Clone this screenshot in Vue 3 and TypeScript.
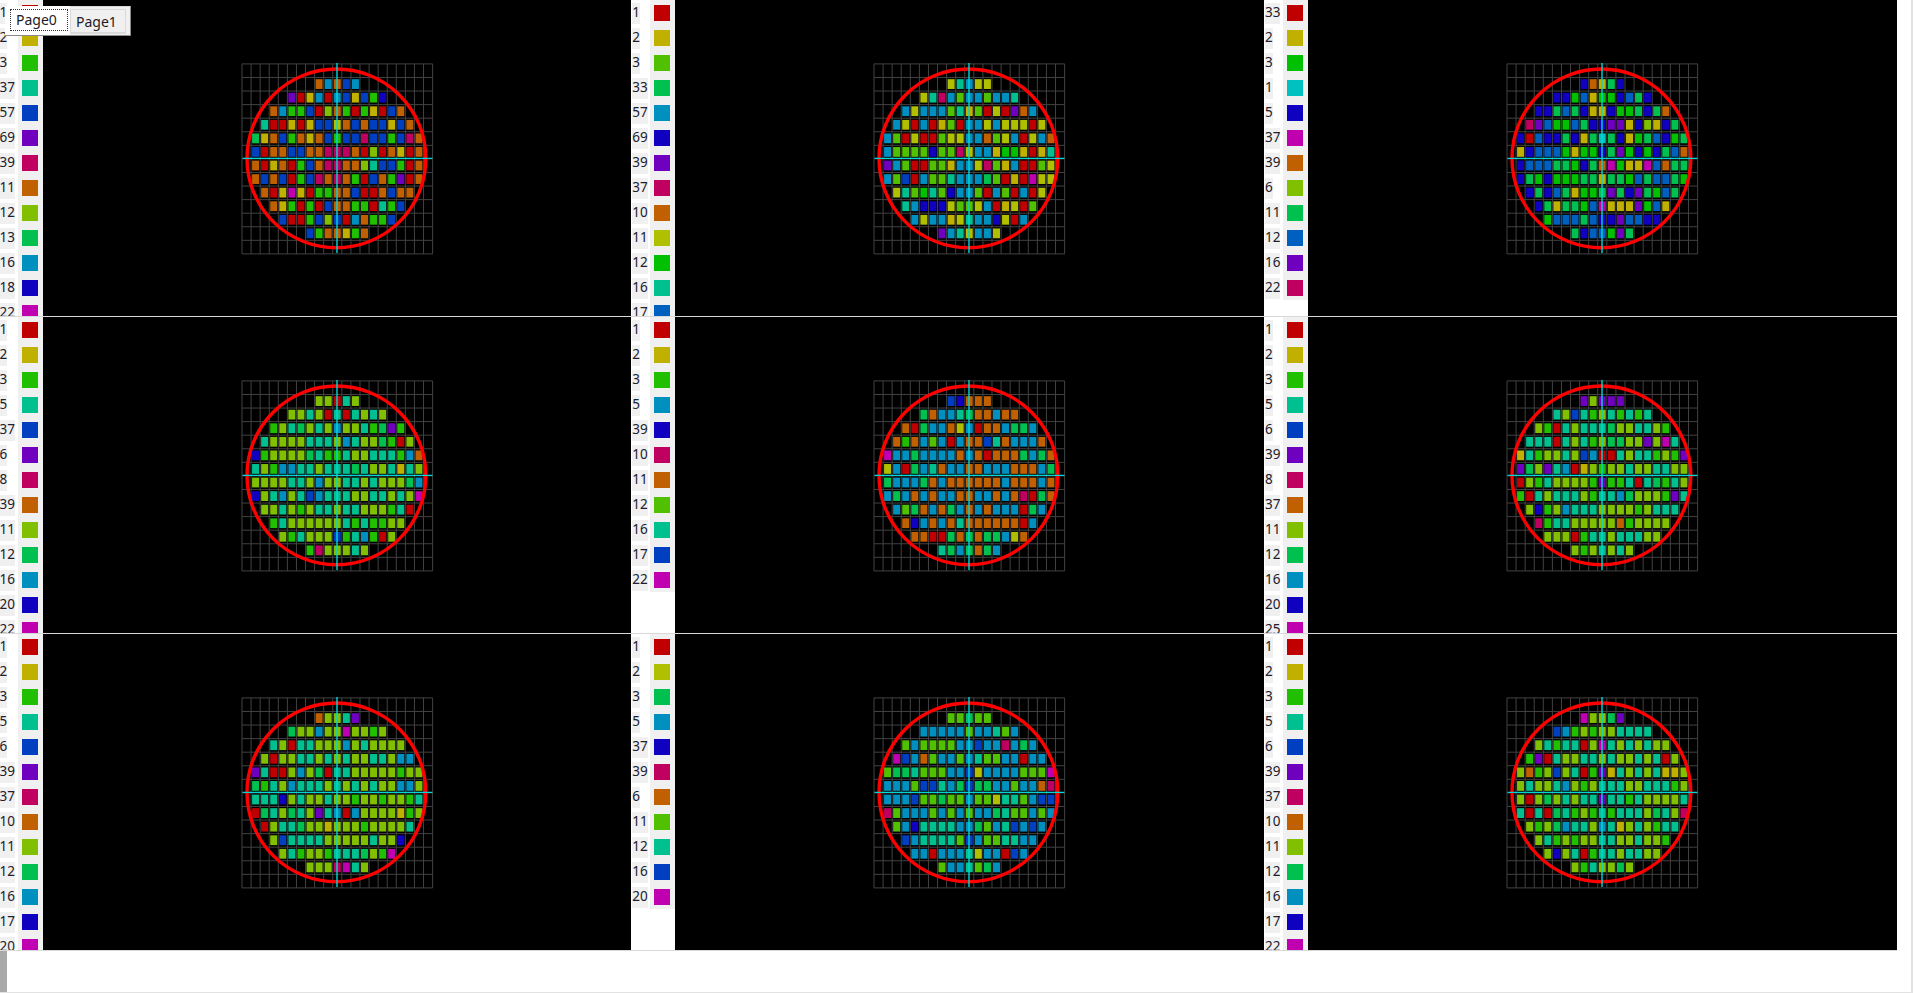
<script setup lang="ts">
const palette: Record<string, string> = {
  R: '#c00000', O: '#c06000', Y: '#c0b000', A: '#b0c000', L: '#80c000', H: '#50c000',
  G: '#20c000', Q: '#00c000', E: '#00c050', T: '#00c090', U: '#00c0c0', C: '#0090c0',
  N: '#0060c0', B: '#0040c0', D: '#1000c0', P: '#7000c0', M: '#c000b0', K: '#c00060'
}

const rowStart = [7, 4, 2, 1, 0, 0, 0, 0, 1, 2, 3, 6]
const pitchX = 190.6 / 21
const pitchY = 190 / 14
const gridLeft = 199
const gridTop = 63.9

interface Wafer {
  legend: [string, string][]
  rows: string[]
}

const wafers: Wafer[] = [
  {
    legend: [['1', 'R'], ['2', 'Y'], ['3', 'G'], ['37', 'T'], ['57', 'B'], ['69', 'P'], ['39', 'K'], ['11', 'O'], ['12', 'L'], ['13', 'E'], ['16', 'C'], ['18', 'D'], ['22', 'M']],
    rows: ['OCOBC', 'PRYCRCBYBGD', 'OCGGBRLOGRGYRBO', 'TRRYRYBBAOBOBBYBO', 'EYOBGOYOBGBBKBBGBKO', 'BROOBBOOKKKORLROYRO', 'ORYORGBOKKOOLTBBGRO', 'OBOBRGBKOKOGRBOGPRO', 'ORYMYRGGOOBRROBOO', 'OYGRGRBOOGGRTGB', 'BRRGBLBRCOGGB', 'BGOOYGO']
  },
  {
    legend: [['1', 'R'], ['2', 'Y'], ['3', 'H'], ['33', 'E'], ['57', 'C'], ['69', 'D'], ['39', 'P'], ['37', 'K'], ['10', 'O'], ['11', 'A'], ['12', 'Q'], ['16', 'T'], ['17', 'N']],
    rows: ['ATCAA', 'ATKCHCCHCCT', 'CACCCHTYHRARPOC', 'CARCRYHRCCACAAARA', 'CHRARRHAACCOHACRACO', 'CHHHHDHHKACCYQQYRYT', 'PCHRRHHYCCAKHYCRRHA', 'CHBRCHHTCCCEHRYRMAA', 'ATHQTHDCCHRCHRCRA', 'TCDDDAHHACRYARH', 'CACCYATCCDARC', 'PCTACCA']
  },
  {
    legend: [['33', 'R'], ['2', 'Y'], ['3', 'Q'], ['1', 'U'], ['5', 'D'], ['37', 'M'], ['39', 'O'], ['6', 'L'], ['11', 'E'], ['12', 'N'], ['16', 'P'], ['22', 'K']],
    rows: ['DOYED', 'DDQNYQQDNED', 'DDENEDYYDQQEDEO', 'KPNQQNEDDPPYDLYDE', 'DRNDDEDYEUEDYQENDQE', 'YDNNNQYQQDEPQDQDENO', 'DNNNEEQDEOMQYYMNOEE', 'DEQDQQQEEYEEQNENNEQ', 'DEDNEYQQEPEDPEQNE', 'DEYEEQNMYYYPQNY', 'QNNNENDDPNNDD', 'EDNNQPE']
  },
  {
    legend: [['1', 'R'], ['2', 'Y'], ['3', 'G'], ['5', 'T'], ['37', 'B'], ['6', 'P'], ['8', 'K'], ['39', 'O'], ['11', 'L'], ['12', 'E'], ['16', 'C'], ['20', 'D'], ['22', 'M']],
    rows: ['LLRTL', 'LLTLRTRTLTL', 'GLTELTLCLLTGEPG', 'TLLLLTTTLCTLLEGRL', 'DGLLLLETGGTLLTTTGCO', 'TLGCCTTLTTTETLLTYTL', 'LLLLTTLCLLTTLTLLLEC', 'DLTCLTBCTTTLLTTLTLM', 'LLTLGLTTLTTLLLGTR', 'GTLLLLLLTGTGGLL', 'LGTLLLBGTCGRL', 'GKLLLTL']
  },
  {
    legend: [['1', 'R'], ['2', 'Y'], ['3', 'G'], ['5', 'C'], ['39', 'D'], ['10', 'K'], ['11', 'O'], ['12', 'H'], ['16', 'T'], ['17', 'B'], ['22', 'M']],
    rows: ['BDOOO', 'EOCCTEOOCOO', 'ORECCOACROOCEEC', 'OGOCHCRCOOBTOCCCO', 'MCCECCCCOCOROOOECEO', 'ACRECTOCCOOCCCOOOCE', 'ECCCEOCOOOOOOCOOOCO', 'CECOCOCCOOCCOCOKREO', 'CHEOCOECOCOCCCREC', 'ODCOCOTOOOOOORC', 'OORREOEOEECAO', 'TECEOEC']
  },
  {
    legend: [['1', 'R'], ['2', 'Y'], ['3', 'G'], ['5', 'T'], ['6', 'B'], ['39', 'P'], ['8', 'K'], ['37', 'O'], ['11', 'L'], ['12', 'E'], ['16', 'C'], ['20', 'D'], ['25', 'M']],
    rows: ['PLPPP', 'TLBTGLTGTGT', 'LGRTLTTTELLTTLG', 'TTTRTLTGLEELLPLMT', 'YTGLLTLBCRRTLTTGLGP', 'PELPTCRYLGLLTLLTTLL', 'RLGTLLLLGPGGTRTEGTL', 'GRTLTTTLGTTCELLLGPT', 'LDGLCTTTLLLLGLTTT', 'KGTTLLLLLOGLLLL', 'LLLRGTTLTTTLL', 'LGLTLTL']
  },
  {
    legend: [['1', 'R'], ['2', 'Y'], ['3', 'G'], ['5', 'T'], ['6', 'B'], ['39', 'P'], ['37', 'K'], ['10', 'O'], ['11', 'L'], ['12', 'E'], ['16', 'C'], ['17', 'D'], ['20', 'M']],
    rows: ['OLLTP', 'ELLCLLMLLGL', 'TLRTTLLLCLTLLLL', 'LRLLTTLTLTLLTTLCC', 'PTRRLCLERTTLLLLLGLL', 'EGTLCTTTLTLTLTLLCCL', 'TTTDLTLLTLLGLLGLLGT', 'RETLETLPTCRCLLLLYGL', 'RLTTELLYLLLGLLLLT', 'LBTTTTLLLLLTLLD', 'LTGLLGTTTELGM', 'LLLKMTL']
  },
  {
    legend: [['1', 'R'], ['2', 'A'], ['3', 'E'], ['5', 'C'], ['37', 'D'], ['39', 'K'], ['6', 'O'], ['11', 'H'], ['12', 'T'], ['16', 'B'], ['20', 'M']],
    rows: ['HHEHH', 'CCCCCHCCTHC', 'HCHHHHCCBCCKCEC', 'MBCOHCCHCTHHCCRCC', 'HEETHHHCCBACCCCHHHM', 'CCCHBBTCEBEECCHCCOK', 'CCCBHHEHHCHHATTHCBB', 'KHCCCHCHCHCCETHHCHC', 'HCDTTTTCCEHCTBCBC', 'BCTTTTHBCHHTTCC', 'CCRCCCTACCRBC', 'HCCTHEC']
  },
  {
    legend: [['1', 'R'], ['2', 'Y'], ['3', 'G'], ['5', 'T'], ['6', 'B'], ['39', 'P'], ['37', 'K'], ['10', 'O'], ['11', 'L'], ['12', 'E'], ['16', 'C'], ['17', 'D'], ['22', 'M']],
    rows: ['MLLEP', 'BCGLGLLTTTT', 'LTGTTRLMTLTLTLL', 'GPRTLLTTLTLLTLTRL', 'LOGLBLTRGPYTLTLTYYL', 'LTLLTCLGLTTTLLTTTGL', 'LRLELTLTTPTTGTLLLLT', 'TRTRETGLGTGTTTLETLK', 'LGLECTTLCTYLTLGTT', 'LTGLGLLTTLLTLLG', 'LDLTRGTTLTTLL', 'LGTLLEL']
  }
]

interface Die {
  x: number
  y: number
  fill: string
}

function diesOf(w: Wafer): Die[] {
  const out: Die[] = []
  w.rows.forEach((row, r) => {
    for (let i = 0; i < row.length; i++) {
      out.push({
        x: gridLeft + (rowStart[r] + i + 1) * pitchX + 1,
        y: gridTop + (r + 1) * pitchY + 1.7,
        fill: palette[row[i]]
      })
    }
  })
  return out
}

const panels = wafers.map((w) => ({
  legend: w.legend.map(([label, key]) => ({ label, color: palette[key] })),
  dies: diesOf(w)
}))

const xLines = Array.from({ length: 22 }, (_, i) => gridLeft + i * pitchX)
const yLines = Array.from({ length: 15 }, (_, i) => gridTop + i * pitchY)
const gridRight = gridLeft + 190.6
const gridBottom = gridTop + 190
</script>

<template>
  <div class="window">
    <div class="tabs">
      <div class="tab active"><span class="focus">Page0</span></div>
      <div class="tab">Page1</div>
    </div>
    <div class="sheet">
      <section v-for="(p, pi) in panels" :key="pi" class="panel">
        <div class="strip">
          <div v-for="(item, li) in p.legend" :key="li" class="item">
            <span class="num"><span class="numtext">{{ item.label }}</span></span>
            <span class="cell"><span class="swatch" :style="{ background: item.color }"></span></span>
          </div>
        </div>
        <svg class="plot" xmlns="http://www.w3.org/2000/svg">
          <g stroke="#424242" stroke-width="1">
            <line v-for="x in xLines" :key="'x' + x" :x1="x" :x2="x" :y1="gridTop" :y2="gridBottom" />
            <line v-for="y in yLines" :key="'y' + y" :x1="gridLeft" :x2="gridRight" :y1="y" :y2="y" />
          </g>
          <rect
            v-for="(d, di) in p.dies"
            :key="di"
            :x="d.x"
            :y="d.y"
            width="7"
            height="9.8"
            :fill="d.fill"
          />
          <circle cx="293.4" cy="158.4" r="89.4" fill="none" stroke="#ff0000" stroke-width="3.4" />
          <g stroke="#00d8d8" stroke-width="1.4">
            <line x1="294" x2="294" y1="63" y2="253" />
            <line x1="199.5" x2="389.5" y1="158.4" y2="158.4" />
          </g>
        </svg>
      </section>
    </div>
    <div class="scrollstub"></div>
  </div>
</template>

<style>
html,
body {
  margin: 0;
  background: #ffffff;
  overflow: hidden;
}
</style>

<style scoped>
.window {
  position: relative;
  width: 1913px;
  height: 993px;
  box-sizing: border-box;
  border-right: 2px solid #e2e2e2;
  border-bottom: 1px solid #e2e2e2;
  background: #ffffff;
  overflow: hidden;
  font-family: "Noto Sans", "Open Sans", sans-serif;
}
.sheet {
  display: grid;
  grid-template-columns: repeat(3, 632.67px);
  grid-auto-rows: 317px;
  margin-left: -1.4px;
  width: 1900px;
}
.panel {
  display: flex;
  height: 317px;
  box-sizing: border-box;
  border-bottom: 1px solid #d8d8d8;
  overflow: hidden;
}
.strip {
  flex: 0 0 44px;
  background: #ffffff;
  overflow: hidden;
}
.item {
  display: flex;
  height: 25px;
}
.num {
  flex: 0 0 19px;
  padding-left: 1px;
  box-sizing: border-box;
  background: #ffffff;
}
.numtext {
  display: inline-block;
  height: 21px;
  background: #f0f0f0;
  color: #20202c;
  font-size: 13.5px;
  line-height: 19px;
}
.cell {
  flex: 1 1 auto;
  background: #f0f0f0;
}
.swatch {
  display: block;
  width: 16px;
  height: 16px;
  margin: 5px 0 0 4px;
}
.plot {
  flex: 1 1 auto;
  display: block;
  height: 316px;
  background: #000000;
}
.scrollstub {
  width: 7px;
  height: 41px;
  background: #a9a9a9;
}
.tabs {
  position: absolute;
  z-index: 2;
  left: 5px;
  top: 6px;
  width: 126px;
  height: 30px;
  box-sizing: border-box;
  display: flex;
  align-items: flex-start;
  background: #f0f0f0;
  border-right: 1px solid #8a8a8a;
  border-bottom: 1px solid #8a8a8a;
  border-top: 1px solid #d8d8d8;
  font-size: 14px;
  color: #1c1c28;
}
.tab {
  box-sizing: border-box;
  height: 25px;
  margin-top: 2px;
  padding: 1px 0 0 5px;
  line-height: 22px;
  width: 56px;
  border: 1px solid #dadada;
  border-bottom-width: 2px;
}
.tab.active {
  width: 65px;
  height: 29px;
  margin-top: -1px;
  padding: 3px 2px 0 5px;
  background: #ffffff;
  border: 0;
}
.focus {
  display: block;
  width: 58px;
  height: 22px;
  line-height: 20px;
  box-sizing: border-box;
  padding-left: 5px;
  border: 1px dotted #333333;
}
</style>
